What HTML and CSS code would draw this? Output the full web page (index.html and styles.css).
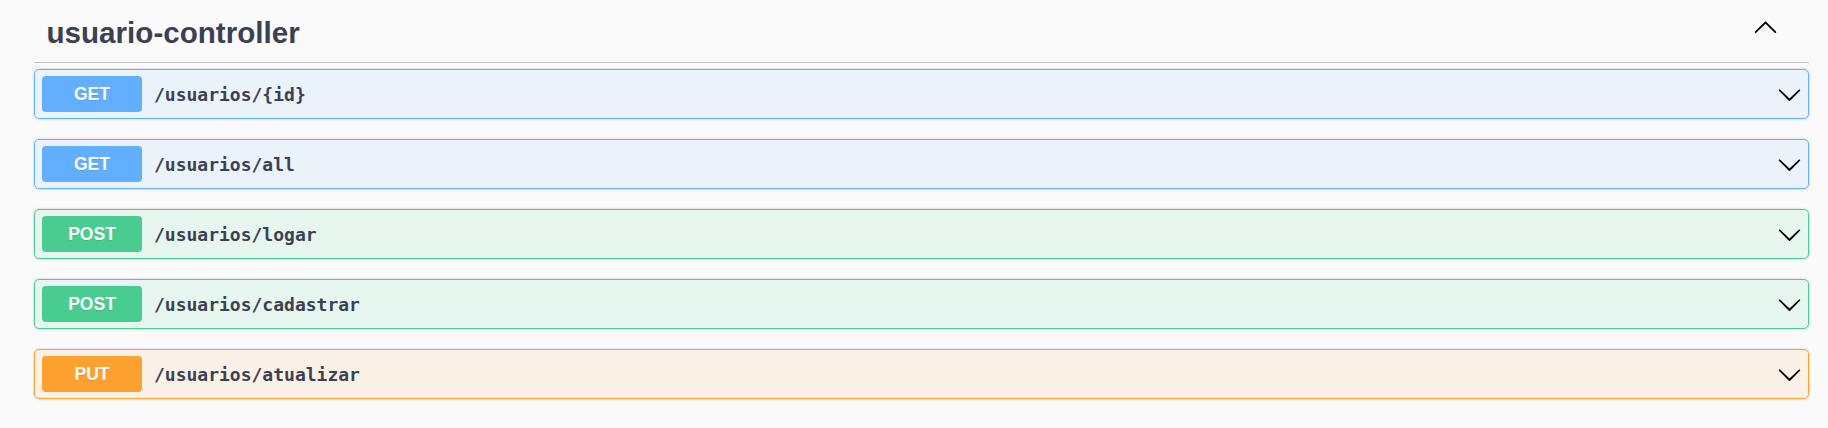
FILE: index.html
```html
<!DOCTYPE html>
<html>
<head>
<meta charset="utf-8">
<link rel="stylesheet" href="styles.css">
</head>
<body>
<div class="wrapper">
  <section class="tag-section">
    <h3 class="tag-header">
      <span class="tag-title">usuario-controller</span>
      <svg class="arrow-up" viewBox="0 0 20 20" width="25" height="25"><path d="M17.418 14.908c.272.268.709.268.979 0 .27-.268.271-.701 0-.969l-7.908-7.83c-.27-.268-.707-.268-.979 0l-7.908 7.83c-.27.268-.27.701 0 .969.271.268.709.268.979 0L10 7.767l7.418 7.141z"/></svg>
    </h3>
    <div class="opblock get">
      <span class="method">GET</span>
      <span class="path">/usuarios/{id}</span>
      <svg class="arrow" viewBox="0 0 20 20" width="25" height="25"><path d="M17.418 6.109c.272-.268.709-.268.979 0s.271.701 0 .969l-7.908 7.83c-.27.268-.707.268-.979 0l-7.908-7.83c-.27-.268-.27-.701 0-.969.271-.268.709-.268.979 0L10 13.25l7.418-7.141z"/></svg>
    </div>
    <div class="opblock get">
      <span class="method">GET</span>
      <span class="path">/usuarios/all</span>
      <svg class="arrow" viewBox="0 0 20 20" width="25" height="25"><path d="M17.418 6.109c.272-.268.709-.268.979 0s.271.701 0 .969l-7.908 7.83c-.27.268-.707.268-.979 0l-7.908-7.83c-.27-.268-.27-.701 0-.969.271-.268.709-.268.979 0L10 13.25l7.418-7.141z"/></svg>
    </div>
    <div class="opblock post">
      <span class="method">POST</span>
      <span class="path">/usuarios/logar</span>
      <svg class="arrow" viewBox="0 0 20 20" width="25" height="25"><path d="M17.418 6.109c.272-.268.709-.268.979 0s.271.701 0 .969l-7.908 7.83c-.27.268-.707.268-.979 0l-7.908-7.83c-.27-.268-.27-.701 0-.969.271-.268.709-.268.979 0L10 13.25l7.418-7.141z"/></svg>
    </div>
    <div class="opblock post">
      <span class="method">POST</span>
      <span class="path">/usuarios/cadastrar</span>
      <svg class="arrow" viewBox="0 0 20 20" width="25" height="25"><path d="M17.418 6.109c.272-.268.709-.268.979 0s.271.701 0 .969l-7.908 7.83c-.27.268-.707.268-.979 0l-7.908-7.83c-.27-.268-.27-.701 0-.969.271-.268.709-.268.979 0L10 13.25l7.418-7.141z"/></svg>
    </div>
    <div class="opblock put">
      <span class="method">PUT</span>
      <span class="path">/usuarios/atualizar</span>
      <svg class="arrow" viewBox="0 0 20 20" width="25" height="25"><path d="M17.418 6.109c.272-.268.709-.268.979 0s.271.701 0 .969l-7.908 7.83c-.27.268-.707.268-.979 0l-7.908-7.83c-.27-.268-.27-.701 0-.969.271-.268.709-.268.979 0L10 13.25l7.418-7.141z"/></svg>
    </div>
  </section>
</div>
</body>
</html>
```

FILE: styles.css
```css
html, body {
  margin: 0;
  padding: 0;
  background: #fafafa;
}

.wrapper {
  padding: 0 19px 0 34px;
}

.tag-header {
  display: flex;
  align-items: flex-start;
  margin: 0 0 6px 0;
  height: 63px;
  box-sizing: border-box;
  padding: 14.6px 30.7px 0 12.5px;
  border-bottom: 1px solid rgba(59, 65, 81, 0.3);
}

.tag-title {
  flex: 1;
  font-family: "Liberation Sans", Arial, sans-serif;
  font-weight: 700;
  font-size: 29.6px;
  line-height: 36px;
  color: #3b4151;
}

.arrow-up {
  margin-top: -1px;
  fill: #000;
  flex: none;
}

.opblock {
  display: flex;
  align-items: center;
  height: 50px;
  box-sizing: border-box;
  padding: 0 6px 0 7px;
  margin-bottom: 20px;
  border: 1px solid;
  border-radius: 5px;
  box-shadow: 0 0 3px rgba(0, 0, 0, 0.19);
}

.method {
  flex: none;
  width: 100px;
  height: 36px;
  display: flex;
  align-items: center;
  justify-content: center;
  border-radius: 4px;
  color: #fff;
  font-family: "Liberation Sans", Arial, sans-serif;
  font-weight: 700;
  font-size: 17.5px;
  text-shadow: 0 1px 0 rgba(0, 0, 0, 0.1);
}

.path {
  flex: 1;
  padding-left: 12px;
  font-family: "DejaVu Sans Mono", "Liberation Mono", monospace;
  font-weight: 700;
  font-size: 18px;
  color: #3b4151;
}

.arrow {
  flex: none;
  fill: #000;
}

.get {
  border-color: #61affe;
  background: rgba(97, 175, 254, 0.1);
}
.get .method { background: #61affe; }

.post {
  border-color: #49cc90;
  background: rgba(73, 204, 144, 0.1);
}
.post .method { background: #49cc90; }

.put {
  border-color: #fca130;
  background: rgba(252, 161, 48, 0.1);
}
.put .method { background: #fca130; }
```
